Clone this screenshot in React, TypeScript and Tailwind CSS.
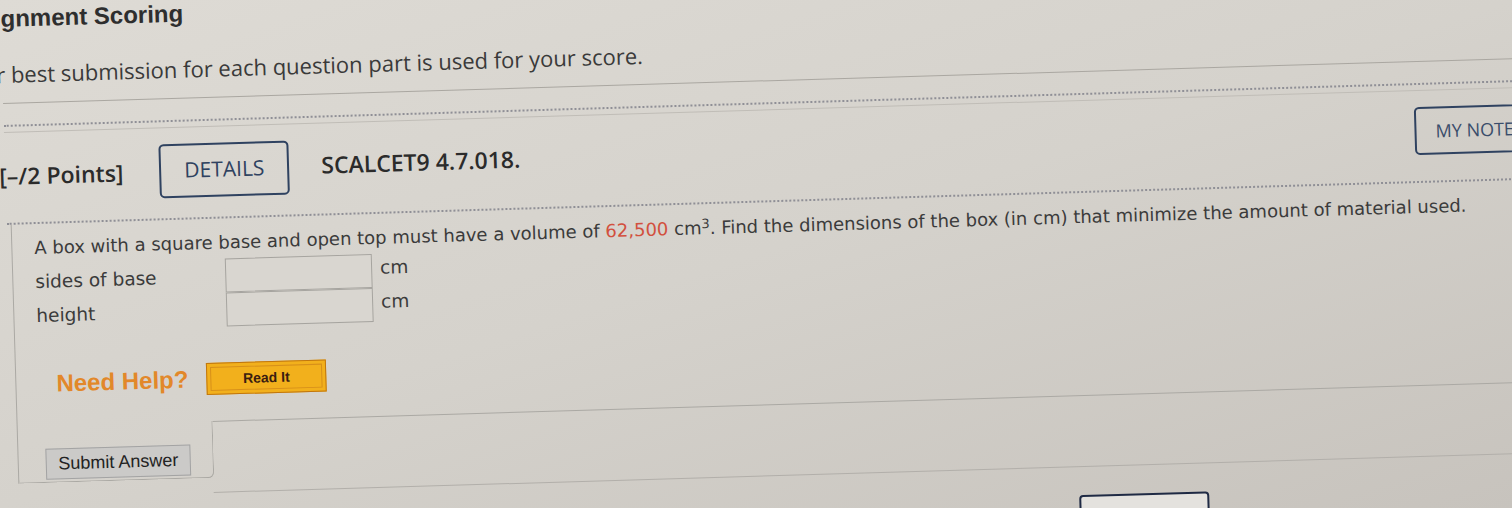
import React from 'react'

/**
 * WebAssign-style question panel, photographed a little off-axis.
 */
export default function App() {
  return (
    <div className="w-[1512px] h-[508px] overflow-hidden bg-gradient-to-br from-[#dedbd5] via-[#d5d2cc] to-[#c7c3bd]">
      <div className="w-[1640px] h-[600px] origin-top-left rotate-[-1.7deg] font-['Open_Sans',sans-serif] text-[#333]">
        {/* Heading */}
        <h1 className="pt-[7px] text-[24px] leading-none font-bold font-['Liberation_Sans',Arial,sans-serif] text-[#2e2e2e]">
          gnment Scoring
        </h1>
        <p className="mt-[29px] -ml-[6px] text-[22px] leading-[28px] text-[#3a3a3a]">
          r best submission for each question part is used for your score.
        </p>

        {/* Separators */}
        <div className="mt-[15px] border-t border-[#aaa7a1]" />
        <div className="mt-[21px] border-t-2 border-dotted border-[#8f8f96]" />
        <div className="mt-[5px] border-t border-[#c0bdb7]" />

        {/* Points row */}
        <div className="mt-[16px] h-[54px] flex items-center">
          <span className="-ml-[6px] text-[23px] font-semibold text-[#2b2b2b]">[–/2 Points]</span>
          <button className="ml-[36px] h-[54px] w-[130px] rounded-[5px] border-2 border-[#2f4260] text-[21px] text-[#2f4260]">
            DETAILS
          </button>
          <span className="ml-[32px] -mt-[3px] text-[23px] font-semibold text-[#2b2b2b]">SCALCET9 4.7.018.</span>
          <button className="ml-auto mr-[50px] -mt-[6px] h-[48px] w-[180px] rounded-[5px] border-2 border-[#2f4260] text-left pl-[19px] text-[18px] text-[#3a4d6b]">
            MY NOTES
          </button>
        </div>
        <div className="mt-[20px] border-t-2 border-dotted border-[#8f8f96]" />

        {/* Question */}
        <div className="ml-[4px] border-l border-[#aba9a4]">
          <div className="pl-[22px] pt-[11px]">
            <p className="text-[18px] leading-[26px] font-['DejaVu_Sans',Verdana,sans-serif] text-[#3b3b3b]">
              A box with a square base and open top must have a volume of{' '}
              <span className="text-[#d2503e]">62,500</span> cm<sup className="text-[13px]">3</sup>. Find the dimensions of the box (in cm) that minimize the amount of material used.
            </p>

            <div className="mt-[3px] grid grid-cols-[190px_147px_auto] text-[18.5px] font-['DejaVu_Sans',Verdana,sans-serif] text-[#3b3b3b]">
              <span className="pt-[7px] leading-[22px]">sides of base</span>
              <div className="h-[34px] border border-[#a6a49f] bg-[#d9d6d0]" />
              <span className="pl-[8px] pt-[3px] leading-[22px]">cm</span>
              <span className="pt-[7px] leading-[22px]">height</span>
              <div className="h-[34px] border border-[#a6a49f] bg-[#d9d6d0]" />
              <span className="pl-[8px] pt-[3px] leading-[22px]">cm</span>
            </div>

            <div className="mt-[34px] ml-[18px] flex items-center gap-[18px]">
              <span className="text-[24px] font-bold font-['Liberation_Sans',Arial,sans-serif] text-[#e2882a]">Need Help?</span>
              <button className="h-[32px] w-[120px] border border-[#c0760f] bg-[#f2b01c] p-[3px]">
                <span className="flex h-full items-center justify-center border border-[#d7901a] text-[14px] font-bold font-['Liberation_Sans',Arial,sans-serif] text-[#3a1d10]">
                  Read It
                </span>
              </button>
            </div>
          </div>

          <div className="mt-[24px] flex">
            <div className="w-[195px] h-[57px] shrink-0 border-b border-r border-[#aba9a4] rounded-br-[6px] pl-[27px] pt-[23px]">
              <button className="h-[31px] w-[145px] border border-[#a3a3a3] bg-[#cbcac8] text-[18px] font-['Liberation_Sans',Arial,sans-serif] text-[#222]">
                Submit Answer
              </button>
            </div>
            <div className="flex-1 border-t border-[#aba9a4]" />
          </div>
        </div>

        <div className="ml-[199px] mt-[14px] border-t border-[#b2afaa]" />
        <div className="ml-[1064px] mt-[28px] h-[24px] w-[130px] rounded-[4px] border-2 border-[#1f2a44] bg-[#e4e2de]" />
      </div>
    </div>
  )
}
